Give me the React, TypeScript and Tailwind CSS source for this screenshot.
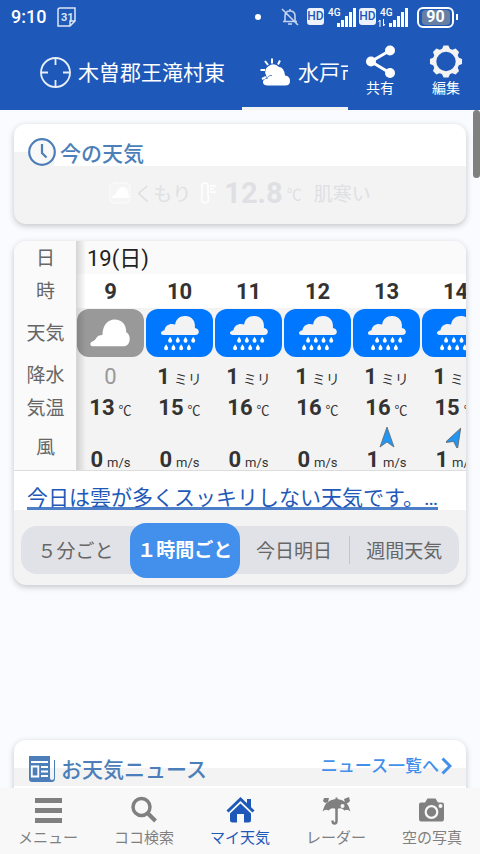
import type { ReactNode } from 'react'

const hours = [
  { hour: '9', sky: 'cloud', rain: 0, temp: 13, wind: 0, dir: null },
  { hour: '10', sky: 'rain', rain: 1, temp: 15, wind: 0, dir: null },
  { hour: '11', sky: 'rain', rain: 1, temp: 16, wind: 0, dir: null },
  { hour: '12', sky: 'rain', rain: 1, temp: 16, wind: 0, dir: null },
  { hour: '13', sky: 'rain', rain: 1, temp: 16, wind: 1, dir: 0 },
  { hour: '14', sky: 'rain', rain: 1, temp: 15, wind: 1, dir: 28 },
]

const ranges = ['５分ごと', '１時間ごと', '今日明日', '週間天気']

const CloudTile = () => (
  <svg viewBox="0 0 200 142" className="block h-12 w-[67px] rounded-xl bg-[#999999]" fill="#fff" preserveAspectRatio="none">
    <path d="M46 110C38 109 38 99 46 96C52 94 55 90 58 85C62 79 69 77 76 77C76 50 91 31 112 31C134 31 147 46 147 69C163 77 160 109 142 110Z" />
  </svg>
)

const RainTile = () => (
  <svg viewBox="0 0 200 142" className="block h-12 w-[67px] rounded-xl bg-[#0077ff]" fill="#f3f3f3" preserveAspectRatio="none">
    <path d="M53 77C42 77 41 66 55 63C58 47 72 41 87 46C89 30 102 20 118 21C137 22 148 35 146 56C161 57 162 77 147 77Z" />
    {[[72, 82], [95, 82], [118, 82], [141, 82], [60, 104], [82, 104], [105, 104], [128, 104]].map(([x, y]) => (
      <path key={`${x}-${y}`} fill="#fff" d={`M${x} ${y}c3 5 6 9 6 12a6 6 0 0 1-12 0c0-3 3-7 6-12Z`} />
    ))}
  </svg>
)

const Signal = () => (
  <svg viewBox="0 0 19 19" className="h-[19px] w-[19px]" fill="#fff">
    <path d="M0 15h3v4H0zM4 12h3v7H4zM8 8h3v11H8zM12 4h3v15h-3zM16 0h3v19h-3z" />
  </svg>
)

const Sim = ({ arrows }: { arrows?: boolean }) => (
  <div className="flex">
    <span className="flex h-[17px] w-[17px] items-center justify-center rounded-[3px] bg-[#eef3fb] text-xs font-medium text-[#1e59b9]">HD</span>
    <div className="relative ml-[13px]">
      <span className="absolute -left-[9px] -top-px text-[10px] leading-[12px] font-medium">4G</span>
      {arrows && (
        <svg viewBox="0 0 8 8" className="absolute -left-[11px] bottom-0 h-2 w-2" fill="none" stroke="#fff">
          <path d="M2 8V1M.5 3L2 1M5.500 0V7M7 5L5.500 7" />
        </svg>
      )}
      <Signal />
    </div>
  </div>
)

const StatusBar = () => (
  <div className="flex h-[34px] items-center pl-[11px] pr-[22px]">
    <span className="text-lg font-medium">9:10</span>
    <svg viewBox="0 0 20 20" className="ml-[11px] h-5 w-5" fill="none" stroke="#dce6f5" strokeWidth="1.5">
      <path d="M3 1h15v13l-5 5H1V3Q1 1 3 1M18 14h-5v5" />
      <text x="4" y="13.500" fontSize="11" fontWeight="700" fill="#dce6f5" stroke="none">31</text>
    </svg>
    <span className="ml-auto h-1.5 w-1.5 rounded-full bg-white" />
    <svg viewBox="0 0 18 18" className="ml-5 h-[18px] w-[18px]" fill="none" stroke="#c4d3ee" strokeWidth="1.6">
      <path d="M4 13V8Q4 3 9 3t5 5v5M2 13.500h14M9 1v2M7 16h4M1 1l16 16" />
    </svg>
    <div className="ml-2 flex gap-[3px] text-white">
      <Sim />
      <Sim arrows />
    </div>
    <div className="ml-[9px] flex items-center">
      <span className="flex h-[21px] w-[37px] items-center justify-center rounded-md border-2 border-white">
        <span className="flex h-[15px] w-7 items-center justify-center rounded-sm bg-[#667fa3] text-base font-bold">90</span>
      </span>
      <span className="ml-0.5 h-1.5 w-0.5 bg-white" />
    </div>
  </div>
)

const Header = () => (
  <header className="bg-[#1e59b9] text-white">
    <StatusBar />
    <div className="flex h-[76px]">
      <div className="flex min-w-0 flex-1 overflow-hidden whitespace-nowrap text-[21px]">
        <button className="flex shrink-0 items-center gap-[7px] pl-10 pr-[17px]">
          <svg viewBox="0 0 31 31" className="h-[31px] w-[31px]" fill="none" stroke="#e8eef8" strokeWidth="1.8">
            <circle cx="15.500" cy="15.500" r="14.500" />
            <path d="M15.500 1v7M15.500 23v7M1 15.500h7M23 15.500h7" />
          </svg>
          <span className="pt-[3px]">木曽郡王滝村東</span>
        </button>
        <button className="flex min-w-0 flex-1 items-center gap-[7px] overflow-hidden border-b-[3px] border-[#f3f3f3] pl-[18px] pt-[3px]">
          <svg viewBox="0 0 31 28" className="h-7 w-[31px] shrink-0" fill="#fff">
            <path d="M12 .5v5M5 3l3 4M20 2.500l-2 4M.5 12h4.500M2 21l4-2" stroke="#fff" strokeWidth="2" />
            <path d="M6 17A7 7 0 0 1 8 8.500Q14 4 19 9Q24 9 25 17.500Q30 18 30 23Q30 27.500 25 27.500H8Q2.500 27.500 3 23.500Q3.500 21 7 20.500Z" />
            <path d="M7 21Q8 17 12 17.500" fill="none" stroke="#1e59b9" strokeWidth=".7" />
          </svg>
          <span className="pt-[3px]">水戸市</span>
        </button>
      </div>
      <button className="flex w-[66px] flex-col items-center pr-0.5 pt-[10px] text-sm leading-[18px]">
        <svg viewBox="0 0 34 35" className="h-[35px] w-[34px]" fill="#fff">
          <path d="M27 6.500L8 17.500L27 29" fill="none" stroke="#fff" strokeWidth="3" />
          <circle cx="27" cy="6.500" r="5" />
          <circle cx="8" cy="17.500" r="5" />
          <circle cx="27" cy="29" r="5" />
        </svg>
        共有
      </button>
      <button className="flex w-[66px] flex-col items-center pr-0.5 pt-[10px] text-sm leading-[18px]">
        <svg viewBox="-17.500 -17.500 35 35" className="h-[35px] w-[34px]" fill="#f3f3f3">
          <circle r="11.800" fill="none" stroke="#f3f3f3" strokeWidth="3.600" />
          {[0, 45, 90, 135, 180, 225, 270, 315].map(a => (
            <path key={a} d="M-4.500-12L-2.500-16.500H2.500L4.500-12Z" transform={`rotate(${a})`} />
          ))}
        </svg>
        編集
      </button>
    </div>
  </header>
)

const Card = ({ className, children }: { className: string; children: ReactNode }) => (
  <section className={`overflow-hidden rounded-xl bg-[#f3f3f3] shadow-[0_2px_6px_rgba(0,0,0,0.22)] ${className}`}>{children}</section>
)

const NowCard = () => (
  <Card className="h-[100px]">
    <div className="flex h-[42px] items-end gap-1 bg-white bg-[linear-gradient(#f3f3f3,#f3f3f3)] bg-size-[40px_14px] bg-bottom-left bg-no-repeat pl-[14px]">
      <svg viewBox="0 0 28 28" className="h-7 w-7" fill="#f8f8f8" stroke="#4c7fba" strokeWidth="2.200">
        <circle cx="14" cy="14" r="12.800" />
        <path d="M14 6v9l4.500 4.500" fill="none" />
      </svg>
      <h2 className="text-[21px] leading-6 font-medium text-[#4c7fba]">今の天気</h2>
    </div>
    <div className="flex h-[54px] items-center justify-center whitespace-nowrap text-[19px] text-[#dfe0e3]">
      <svg viewBox="0 0 22 22" className="h-[22px] w-[22px]" fill="#fff">
        <rect x="1" y="1" width="20" height="20" rx="4" fill="#f5f5f5" stroke="#fff" strokeDasharray="2 1" />
        <path d="M3 16Q2 14 6 13Q9 5 14 5Q19 5 19 11Q22 16 17 16Z" />
      </svg>
      <span className="ml-[3px] pt-1">くもり</span>
      <svg viewBox="0 0 18 22" className="ml-2 h-[22px] w-[18px]" fill="none" stroke="#fff" strokeWidth="1.500">
        <path d="M3 13V4q0-3 3-3t3 3v9q2 8-3 8t-3-8M11 4h6M11 7h4M11 10h6" />
      </svg>
      <span className="ml-[7px] text-[29px] font-bold leading-8">12.8</span>
      <span className="ml-1 pt-1 text-[15px]">℃</span>
      <span className="ml-3 pt-1">肌寒い</span>
    </div>
  </Card>
)

const RowLabel = ({ children }: { children: string }) => (
  <th scope="row" className="bg-[#fafafa] p-0 pt-0.5 text-[19px] font-normal text-[#666]">{children}</th>
)

const Unit = ({ children }: { children: string }) => <span className="ml-1 text-[13px] font-normal">{children}</span>

const HourlyTable = () => (
  <div className="relative overflow-hidden border-b border-[#ddd]">
    <table className="w-[477px] table-fixed border-collapse text-center text-[22px] leading-6 font-bold whitespace-nowrap text-[#333]">
      <colgroup>
        <col className="w-[63px]" />
        {hours.map(h => <col key={h.hour} className="w-[69px]" />)}
      </colgroup>
      <tbody>
        <tr className="h-[33px] bg-[#fafafa]">
          <RowLabel>日</RowLabel>
          <td colSpan={6} className="p-0 pt-0.5 pl-[10px] text-left font-normal text-[#222]">19(日)</td>
        </tr>
        <tr className="h-[34px] bg-white">
          <RowLabel>時</RowLabel>
          {hours.map(h => <td key={h.hour} className="p-0 pt-0.5 pr-0.5">{h.hour}</td>)}
        </tr>
        <tr className="h-[50px]">
          <RowLabel>天気</RowLabel>
          {hours.map(h => <td key={h.hour} className="p-0">{h.sky === 'rain' ? <RainTile /> : <CloudTile />}</td>)}
        </tr>
        <tr className="h-[34px]">
          <RowLabel>降水</RowLabel>
          {hours.map(h => (
            <td key={h.hour} className="p-0 pt-[3px] pr-0.5">
              {h.rain ? (
                <>{h.rain}<span className="ml-1 text-sm font-normal">ミリ</span></>
              ) : (
                <span className="font-normal text-[#999]">0</span>
              )}
            </td>
          ))}
        </tr>
        <tr className="h-8">
          <RowLabel>気温</RowLabel>
          {hours.map(h => <td key={h.hour} className="p-0 pt-[3px] pr-0.5">{h.temp}<Unit>℃</Unit></td>)}
        </tr>
        <tr className="h-[46px]">
          <RowLabel>風</RowLabel>
          {hours.map(h => (
            <td key={h.hour} className="p-0 pr-0.5">
              <div className="flex h-[46px] flex-col items-center justify-end">
                {h.dir !== null && (
                  <svg viewBox="-10 -11 20 22" className="h-[22px] w-5" fill="#2196f3" stroke="#666" strokeWidth=".8">
                    <path d="M0-10L7 10L0 5L-7 10Z" transform={`rotate(${h.dir})`} />
                  </svg>
                )}
                <div className="h-[22px] leading-6">{h.wind}<Unit>m/s</Unit></div>
              </div>
            </td>
          ))}
        </tr>
      </tbody>
    </table>
    {/* edge shadow of the fixed label column */}
    <div className="pointer-events-none absolute inset-y-0 left-[62px] w-[10px] bg-linear-to-r from-black/15 to-transparent" />
  </div>
)

const ForecastCard = () => (
  <Card className="mt-[17px]">
    <HourlyTable />
    <div className="h-[39px] bg-white pl-[13px] pr-7 pt-3">
      <a href="#comment" className="block h-[27px] w-fit border-b-[3px] border-[#4c7fc8] text-[21px] leading-[30px] whitespace-nowrap text-[#1e59b9]">
        今日は雲が多くスッキリしない天気です。…
      </a>
    </div>
    <div className="px-[7px] pt-4 pb-[11px]">
      <div className="flex h-12 items-center rounded-2xl bg-[#e0e2e7] text-[19px] whitespace-nowrap text-[#666]">
        {ranges.map((r, i) => (
          <button
            key={r}
            className={
              i === 1
                ? 'h-[55px] flex-1 rounded-2xl bg-[#4390ec] pt-[3px] font-bold text-white'
                : i === 3
                  ? 'h-7 flex-1 border-l border-[#c4c6ca] pt-0.5'
                  : 'h-7 flex-1 pt-0.5'
            }
          >
            {r}
          </button>
        ))}
      </div>
    </div>
  </Card>
)

const NewsCard = () => (
  <Card className="mt-[155px] h-[200px]">
    <div className="flex h-[48px] justify-between border-b-2 border-white bg-[linear-gradient(#fff_28px,#f3f3f3_28px)] pl-[14px] pr-[14px]">
      <div className="flex items-center gap-[6px] pt-[11px]">
        <svg viewBox="0 0 27 26" className="h-[26px] w-[27px]" fill="#4c7fba">
          <path d="M1 0h21v22q0 2 2 2t2-2V4h1v18q0 4-3 4H4q-3 0-3-3Z" />
          <path d="M3 6h17M3.800 10.500h6.500v10H3.800zM13 11h7M13 15.500h7M13 20h7" fill="none" stroke="#fff" strokeWidth="1.800" />
        </svg>
        <h2 className="pt-0.5 text-[21px] leading-7 font-medium text-[#4c7fba]">お天気ニュース</h2>
      </div>
      <a href="#news" className="flex items-center gap-0.5 pt-[6px] text-[17px] font-medium text-[#4390ec]">
        <span className="pt-0.5">ニュース一覧へ</span>
        <svg viewBox="0 0 11 18" className="h-[18px] w-[11px]" fill="none" stroke="#4390ec" strokeWidth="3">
          <path d="M1.500 1.500L9 9l-7.500 7.500" />
        </svg>
      </a>
    </div>
  </Card>
)

const tabs = [
  {
    label: 'メニュー',
    icon: <path d="M1 3h27v5H1zM1 13h27v5H1zM1 23h27v5H1z" />,
  },
  {
    label: 'ココ検索',
    icon: (
      <g fill="none" stroke="currentColor">
        <circle cx="11.500" cy="12" r="8.500" strokeWidth="3.500" />
        <path d="M17.500 18l8 8" strokeWidth="4" />
      </g>
    ),
  },
  {
    label: 'マイ天気',
    icon: (
      <>
        <path d="M1.500 16.500L14.500 4L27.500 16.500" fill="none" stroke="currentColor" strokeWidth="3" />
        <path d="M21 4h4v9l-4-4ZM14.500 8.500L25 18.500V25q0 2.500-2.500 2.500H18V19H11v8.500H6.500Q4 27.500 4 25V18.500Z" />
      </>
    ),
  },
  {
    label: 'レーダー',
    icon: (
      <>
        <path d="M.5 16.500Q3 5 13.500 4V2.500h2V4Q26 5 28.500 16.500Q25.500 13.500 22.500 15.500Q19 11.500 14.500 14.500Q10 11.500 6.500 15.500Q3.500 13.500.5 16.500Z" />
        <path d="M14.500 12v14q0 2.500-2 2.500t-2-3" fill="none" stroke="currentColor" strokeWidth="2.500" />
        <path d="M2 3l5 0-1 4-3 1-2-2ZM22 4l5-2 1 4-2 2-3 0Z" />
        <circle cx="20.500" cy="11" r="2" fill="#f8f8f8" />
      </>
    ),
  },
  {
    label: '空の写真',
    icon: (
      <>
        <path d="M3 7.500H7L9.500 3.500H17.500L20 7.500H24Q26 7.500 26 9.500V24Q26 26.500 24 26.500H3Q1 26.500 1 24V9.500Q1 7.500 3 7.500Z" />
        <circle cx="13.500" cy="17" r="5.800" fill="none" stroke="#f8f8f8" strokeWidth="2.200" />
        <circle cx="22.500" cy="11" r="2" fill="#f8f8f8" />
      </>
    ),
  },
]

const BottomNav = () => (
  <nav className="z-10 flex h-[66px] shrink-0 bg-[#f8f8f8]">
    {tabs.map((t, i) => (
      <button
        key={t.label}
        className={`flex flex-1 flex-col items-center pt-[7px] text-[15px] leading-[22px] whitespace-nowrap ${i === 2 ? 'text-[#1e59b9]' : 'text-[#808080]'}`}
      >
        <svg viewBox="0 0 29 30" className="mb-0.5 h-[30px] w-[29px]" fill="currentColor">{t.icon}</svg>
        {t.label}
      </button>
    ))}
  </nav>
)

const App = () => {
  return (
    <div className="flex h-screen flex-col overflow-hidden bg-[#fafbfe] font-['Roboto','Noto_Sans_CJK_JP',sans-serif]">
      <Header />
      <main className="relative min-h-0 flex-1 overflow-hidden px-[14px] pt-[14px]">
        <NowCard />
        <ForecastCard />
        <NewsCard />
        <div className="absolute top-0 right-0 h-[68px] w-[7px] rounded-full bg-[#808080]" />
      </main>
      <BottomNav />
    </div>
  )
}

export default App
